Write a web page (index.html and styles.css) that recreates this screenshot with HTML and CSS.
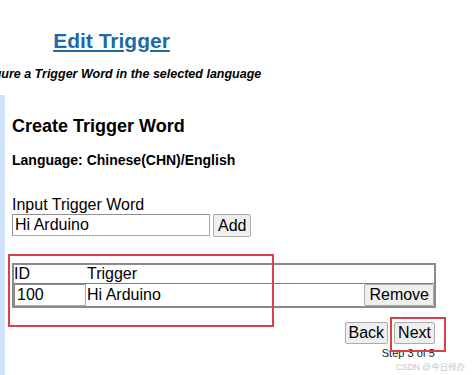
FILE: index.html
```html
<!DOCTYPE html>
<html lang="en">

<head>
  <meta charset="UTF-8">
  <meta name="viewport" content="width=device-width, initial-scale=1.0">
  <title>Edit Trigger</title>
  <link rel="stylesheet" href="styles.css">
</head>

<body>
  <header class="page-head">
    <h1><a href="#">Edit Trigger</a></h1>
    <p class="lead">Configure a Trigger Word in the selected language</p>
  </header>

  <main class="panel">
    <h2>Create Trigger Word</h2>
    <h4 class="lang">Language: Chinese(CHN)/English</h4>

    <!-- Add a new trigger word -->
    <label for="trigger_word" class="field-label">Input Trigger Word</label>
    <div class="add-row">
      <input type="text" id="trigger_word" class="word-input" value="Hi Arduino">
      <button type="button" class="btn">Add</button>
    </div>

    <div class="table-wrap">
      <table class="triggers">
        <thead>
          <tr>
            <th class="col-id">ID</th>
            <th class="col-word">Trigger</th>
            <th class="col-action"></th>
          </tr>
        </thead>
        <tbody>
          <tr>
            <td class="col-id"><input type="text" class="id-input" value="100"></td>
            <td class="col-word">Hi Arduino</td>
            <td class="col-action"><button type="button" class="btn">Remove</button></td>
          </tr>
        </tbody>
      </table>
      <span class="note-frame frame-table"></span>
    </div>

    <div class="nav-row">
      <button type="button" class="btn">Back</button>
      <span class="next-wrap">
        <button type="button" class="btn">Next</button>
        <span class="note-frame frame-next"></span>
      </span>
    </div>
    <p class="step">Step 3 of 5</p>
  </main>

  <div class="watermark">CSDN @今日师办</div>
</body>

</html>
```

FILE: styles.css
```css
body {
  font-family: 'Liberation Sans', Arial, 'Noto Sans CJK SC', sans-serif;
  background-color: #fff;
  color: #000;
  margin: 0;
  height: 100vh;
  overflow: hidden;
  position: relative;
}

/* Title block, centred over the left part of the page */
.page-head {
  width: 223px;
  display: flex;
  flex-direction: column;
  align-items: center;
}

.page-head h1 {
  margin: 29px 0 0;
  font-size: 21px;
  line-height: 24px;
  font-weight: bold;
}

.page-head h1 a {
  color: #1d6aa6;
  text-decoration: underline;
  text-decoration-thickness: 2px;
  text-underline-offset: 2px;
}

.lead {
  margin: 14px 0 0;
  font-size: 12.5px;
  line-height: 15px;
  font-weight: bold;
  font-style: italic;
  white-space: nowrap;
}

.panel {
  margin-top: 13px;
  width: 436px;
  height: calc(100vh - 95px);
  box-sizing: border-box;
  padding: 21px 0 0 7px;
  border-left: 5px solid #cfe2f9;
}

.panel h2 {
  margin: 0;
  font-size: 18px;
  line-height: 21px;
}

.lang {
  margin: 15px 0 0;
  font-size: 14px;
  line-height: 16px;
}

.field-label {
  display: block;
  margin-top: 28px;
  font-size: 16px;
  line-height: 18px;
}

.add-row {
  display: flex;
  align-items: flex-start;
  gap: 3px;
}

.word-input,
.id-input {
  box-sizing: border-box;
  height: 22px;
  margin: 0;
  padding: 0 2px;
  font-family: inherit;
  font-size: 16px;
  color: #000;
  border: 1px solid #a9a9a9;
  border-top-color: #8f8f8f;
  border-left-color: #8f8f8f;
  background-color: #fff;
}

.word-input {
  width: 198px;
}

.id-input {
  width: 72px;
  display: block;
}

.btn {
  box-sizing: border-box;
  height: 22px;
  margin: 0;
  padding: 0 4px;
  font-family: inherit;
  font-size: 16px;
  line-height: 18px;
  color: #000;
  background-color: #efefef;
  border: 1px solid #ababab;
  border-radius: 2px;
}

.add-row .btn {
  height: 23px;
}

.table-wrap {
  position: relative;
  margin-top: 26px;
}

table.triggers {
  width: 100%;
  border-collapse: separate;
  border-spacing: 0;
  border: 2px solid #8a8a8a;
}

.triggers th,
.triggers td {
  padding: 0;
  font-size: 16px;
  text-align: left;
  font-weight: normal;
  vertical-align: middle;
}

.triggers th {
  height: 18px;
  line-height: 18px;
  border-bottom: 1px solid #7d7d7d;
}

.triggers td {
  height: 22px;
}

.triggers .col-id {
  width: 72px;
}

.triggers .col-word {
  padding-left: 1px;
}

.triggers .col-action {
  width: 1%;
  white-space: nowrap;
  text-align: right;
}

.nav-row {
  margin-top: 14px;
  display: flex;
  justify-content: flex-end;
  gap: 6px;
  padding-right: 1px;
}

.nav-row .btn {
  padding: 0 3px;
}

.next-wrap {
  position: relative;
  display: block;
}

.step {
  margin: 3px 0 0;
  padding-right: 1px;
  text-align: right;
  font-size: 11px;
  line-height: 12px;
  color: #222;
}

/* Red annotation boxes drawn over the form */
.note-frame {
  position: absolute;
  box-sizing: border-box;
  border: 2px solid #d9414b;
  pointer-events: none;
}

.frame-table {
  left: -4px;
  top: -9px;
  width: 266px;
  height: 73px;
}

.frame-next {
  left: -4px;
  top: -5px;
  width: 56px;
  height: 35px;
}

.watermark {
  position: absolute;
  right: 9px;
  bottom: 3px;
  font-size: 8.5px;
  color: #c6c6c6;
}
```
